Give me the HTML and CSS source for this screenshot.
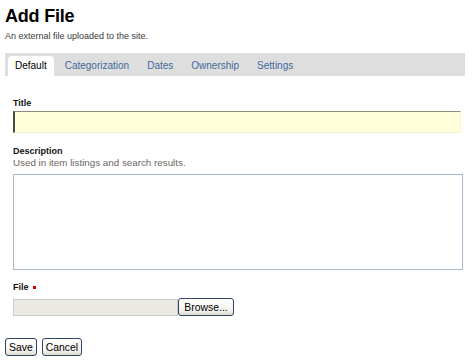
FILE: index.html
```html
<!DOCTYPE html>
<html>
<head>
<meta charset="utf-8">
<link rel="stylesheet" href="styles.css">
</head>
<body>
<div class="page">
  <h1 class="title">Add File</h1>
  <p class="subtitle">An external file uploaded to the site.</p>
  <div class="tabbar">
    <span class="tab active">Default</span>
    <span class="tab">Categorization</span>
    <span class="tab">Dates</span>
    <span class="tab">Ownership</span>
    <span class="tab">Settings</span>
  </div>
  <div class="fields">
    <div class="label">Title</div>
    <div class="text-input"></div>
    <div class="label label-desc">Description</div>
    <div class="help">Used in item listings and search results.</div>
    <div class="textarea"></div>
    <div class="label label-file">File <span class="required"></span></div>
    <div class="file-row">
      <div class="file-field"></div>
      <span class="btn btn-browse">Browse...</span>
    </div>
  </div>
  <div class="actions">
    <span class="btn">Save</span>
    <span class="btn">Cancel</span>
  </div>
</div>
</body>
</html>
```
FILE: styles.css
```css
html, body {
  margin: 0;
  padding: 0;
  background: #ffffff;
}
body {
  font-family: "Liberation Sans", Arial, sans-serif;
  color: #000;
}
.page {
  padding: 0 9px 0 5px;
}
.title {
  margin: 5px 0 0;
  font-size: 18px;
  line-height: 22px;
  font-weight: bold;
  letter-spacing: -0.2px;
}
.subtitle {
  margin: 4px 0 0;
  font-size: 9px;
  line-height: 11px;
  color: #3a3a3a;
}
.tabbar {
  margin-top: 11px;
  height: 23px;
  box-sizing: border-box;
  padding: 3px 0 0 3px;
  background: #dedede;
  display: flex;
  gap: 4px;
}
.tab {
  display: block;
  height: 20px;
  line-height: 20px;
  padding: 0 7px;
  font-size: 10px;
  color: #3f6a9c;
}
.tab.active {
  background: #ffffff;
  color: #000;
  border-radius: 4px 4px 0 0;
}
.fields {
  padding: 22px 0 0 8px;
}
.label {
  font-size: 9px;
  line-height: 11px;
  font-weight: bold;
  color: #111;
}
.text-input {
  margin-top: 2px;
  width: 448px;
  height: 22px;
  box-sizing: border-box;
  background: #ffffdc;
  border-top: 1px solid #8e8b7c;
  border-left: 2px solid #4a4a40;
  border-right: 1px solid #f4f2d8;
  border-bottom: 1px solid #f4f2d8;
}
.label-desc {
  margin-top: 13px;
}
.help {
  font-size: 9.8px;
  line-height: 12px;
  color: #6b6763;
}
.textarea {
  margin-top: 5px;
  width: 450px;
  height: 96px;
  box-sizing: border-box;
  border: 1px solid #a9b8cc;
  background: #fff;
}
.label-file {
  margin-top: 12px;
  display: flex;
  align-items: center;
}
.required {
  display: inline-block;
  width: 3px;
  height: 3px;
  background: #d40000;
  margin-left: 4px;
}
.file-row {
  margin-top: 5px;
  display: flex;
  align-items: center;
  height: 18px;
}
.file-field {
  width: 165px;
  height: 17px;
  box-sizing: border-box;
  background: #ebe9e4;
  border: 1px solid #cdcbc4;
}
.btn {
  display: inline-flex;
  align-items: center;
  justify-content: center;
  height: 18px;
  box-sizing: border-box;
  padding: 0 3px;
  font-size: 10.4px;
  color: #000;
  border: 1px solid #2e4663;
  border-radius: 3px;
  background: linear-gradient(#ffffff, #f4f3ee 70%, #dcdad0);
}
.btn-browse {
  width: 56px;
  margin-left: 0;
}
.actions {
  margin-top: 22px;
  display: flex;
  gap: 5px;
}
```
